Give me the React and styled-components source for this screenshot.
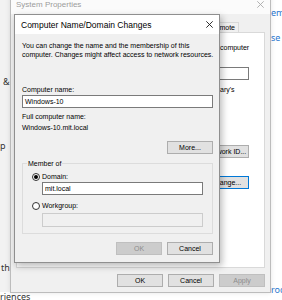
import React from "react";
import styled, { createGlobalStyle } from "styled-components";

const GlobalStyle = createGlobalStyle`
  html, body {
    margin: 0;
    padding: 0;
    background: #ffffff;
  }
  body {
    font-family: "Liberation Sans", Arial, sans-serif;
    color: #000000;
  }
`;

const CloseIcon = ({ color }) => (
  <svg width="7" height="7" viewBox="0 0 7 7">
    <path d="M0.3 0.3 L6.7 6.7 M6.7 0.3 L0.3 6.7" stroke={color} strokeWidth="0.9" fill="none" />
  </svg>
);

const App = () => (
  <>
    <GlobalStyle />
    <Page>
      <LeftStrip>
        <Sidebar>
          <PageText $top={76} $left={3}>&amp;</PageText>
          <PageText $top={52}>p</PageText>
          <PageText $top={110} $left={1}>th</PageText>
        </Sidebar>
        <PageText $top={-1}>riences</PageText>
      </LeftStrip>
      <RightStrip>
        <PageText $top={7} $link>eme</PageText>
        <PageText $top={13} $link>se</PageText>
        <PageText $top={240} $link>roc</PageText>
      </RightStrip>

      <SysWindow>
        <SysTitleBar>
          <SysTitle>System Properties</SysTitle>
          <CloseIcon color="#a9a9a9" />
        </SysTitleBar>
        <SysBody>
          <Tabs>
            <Tab>Remote</Tab>
          </Tabs>
          <TabPanel>
            <PanelRow $gap={0}>
              <span />
              <PanelText>computer</PanelText>
            </PanelRow>
            <PanelRow $gap={15}>
              <span />
              <PanelField />
            </PanelRow>
            <PanelRow $gap={5}>
              <span />
              <PanelText>ary's</PanelText>
            </PanelRow>
            <PanelRow $gap={51}>
              <span />
              <PanelButton>Network ID...</PanelButton>
            </PanelRow>
            <PanelRow $gap={18}>
              <span />
              <PanelButton $focused>Change...</PanelButton>
            </PanelRow>
          </TabPanel>
          <ButtonRow $gap={6}>
            <Button>OK</Button>
            <Button>Cancel</Button>
            <Button disabled>Apply</Button>
          </ButtonRow>
        </SysBody>
      </SysWindow>

      <Dialog>
        <DialogTitleBar>
          <DialogTitle>Computer Name/Domain Changes</DialogTitle>
          <CloseIcon color="#1a1a1a" />
        </DialogTitleBar>
        <DialogBody>
          <Text>
            You can change the name and the membership of this
            <br />
            computer. Changes might affect access to network resources.
          </Text>
          <Text $gap={26}>Computer name:</Text>
          <Field $gap={1}>Windows-10</Field>
          <Text $gap={4}>Full computer name:</Text>
          <Text $gap={2}>Windows-10.mit.local</Text>
          <ButtonRow $gap={9}>
            <Button>More...</Button>
          </ButtonRow>
          <Group>
            <Legend>Member of</Legend>
            <RadioRow>
              <Radio $checked />
              <span>Domain:</span>
            </RadioRow>
            <Field $gap={1} $indent>mit.local</Field>
            <RadioRow $gap={6}>
              <Radio />
              <span>Workgroup:</span>
            </RadioRow>
            <Field $gap={3} $indent $disabled />
          </Group>
          <ButtonRow $gap={8}>
            <Button disabled>OK</Button>
            <Button>Cancel</Button>
          </ButtonRow>
        </DialogBody>
      </Dialog>
    </Page>
  </>
);

export default App;

const Page = styled.div`
  position: relative;
  width: 282px;
  height: 300px;
  overflow: hidden;
  display: flex;
  justify-content: space-between;
  background: #ffffff;
`;

const LeftStrip = styled.div`
  width: 10px;
  display: flex;
  flex-direction: column;
`;

const Sidebar = styled.div`
  height: 292px;
  flex-shrink: 0;
  background: #f2f2f2;
  display: flex;
  flex-direction: column;
`;

const RightStrip = styled.div`
  width: 11px;
  display: flex;
  flex-direction: column;
`;

const PageText = styled.span`
  display: block;
  margin-top: ${p => p.$top}px;
  padding-left: ${p => p.$left || 0}px;
  font-family: "Noto Sans", sans-serif;
  font-size: 9px;
  line-height: 12px;
  color: ${p => (p.$link ? "#2a78cf" : "#333333")};
  white-space: nowrap;
`;

const SysWindow = styled.div`
  position: absolute;
  left: 10px;
  top: -6px;
  width: 261px;
  height: 299px;
  box-sizing: border-box;
  border: 1px solid #bcbcbc;
  background: #f0f0f0;
  display: flex;
  flex-direction: column;
  box-shadow: 0 0 5px rgba(0, 0, 0, 0.1);
`;

const SysTitleBar = styled.div`
  height: 19px;
  flex-shrink: 0;
  background: #fbfbfb;
  display: flex;
  align-items: center;
  justify-content: space-between;
  padding: 0 6px 0 5px;
`;

const SysTitle = styled.span`
  font-size: 8px;
  color: #9c9c9c;
`;

const SysBody = styled.div`
  flex: 1;
  display: flex;
  flex-direction: column;
  padding: 8px 5px 5px 5px;
  min-height: 0;
`;

const Tabs = styled.div`
  height: 10px;
  display: flex;
  justify-content: flex-end;
  align-items: flex-end;
  padding-right: 26px;
`;

const Tab = styled.div`
  width: 34px;
  height: 10px;
  box-sizing: border-box;
  border: 1px solid #d9d9d9;
  border-bottom: none;
  background: #f0f0f0;
  font-size: 7px;
  line-height: 9px;
  text-align: right;
  padding-right: 3px;
  white-space: nowrap;
`;

const TabPanel = styled.div`
  flex: 1;
  background: #ffffff;
  border: 1px solid #d9d9d9;
  padding: 10px 15px 0 8px;
  display: flex;
  flex-direction: column;
`;

const PanelRow = styled.div`
  display: grid;
  grid-template-columns: 1fr 31px;
  align-items: center;
  margin-top: ${p => p.$gap}px;
`;

const PanelText = styled.span`
  font-size: 7px;
  line-height: 9px;
  white-space: nowrap;
  padding-left: 2px;
`;

const PanelField = styled.div`
  height: 13px;
  box-sizing: border-box;
  margin-left: -120px;
  background: #ffffff;
  border: 1px solid #7a7a7a;
`;

const PanelButton = styled.div`
  height: 13px;
  box-sizing: border-box;
  margin-left: -15px;
  background: #e1e1e1;
  border: 1px solid ${p => (p.$focused ? "#0078d7" : "#adadad")};
  font-size: 7px;
  display: flex;
  align-items: center;
  justify-content: center;
  white-space: nowrap;
`;

const ButtonRow = styled.div`
  display: flex;
  justify-content: flex-end;
  gap: 5px;
  margin-top: ${p => p.$gap}px;
`;

const Button = styled.button`
  width: 46px;
  height: 13px;
  box-sizing: border-box;
  padding: 0;
  font-family: inherit;
  font-size: 7px;
  color: #000000;
  background: #e1e1e1;
  border: 1px solid #adadad;
  border-radius: 0;
  &:disabled {
    background: #cccccc;
    border-color: #bfbfbf;
    color: #8c8c8c;
  }
`;

const Dialog = styled.div`
  position: absolute;
  left: 14px;
  top: 14px;
  width: 206px;
  box-sizing: border-box;
  border: 1px solid #8f8f8f;
  background: #f0f0f0;
  display: flex;
  flex-direction: column;
  box-shadow: 2px 3px 7px rgba(0, 0, 0, 0.28);
`;

const DialogTitleBar = styled.div`
  height: 19px;
  background: #ffffff;
  display: flex;
  align-items: center;
  justify-content: space-between;
  padding: 0 6px 0 6px;
`;

const DialogTitle = styled.span`
  font-size: 8.5px;
  color: #000000;
`;

const DialogBody = styled.div`
  display: flex;
  flex-direction: column;
  padding: 7px 6px 7px 7px;
`;

const Text = styled.div`
  font-size: 7px;
  line-height: 9px;
  margin-top: ${p => p.$gap || 0}px;
  white-space: nowrap;
`;

const Field = styled.div`
  height: ${p => (p.$disabled ? 14 : 13)}px;
  box-sizing: border-box;
  margin-top: ${p => p.$gap}px;
  margin-left: ${p => (p.$indent ? 10 : 0)}px;
  padding: 0 2px;
  display: flex;
  align-items: center;
  font-size: 7px;
  background: ${p => (p.$disabled ? "#f0f0f0" : "#ffffff")};
  border: 1px solid ${p => (p.$disabled ? "#cccccc" : "#7a7a7a")};
`;

const Group = styled.fieldset`
  margin: 5px 0 0 0;
  padding: 4px 9px 6px 9px;
  min-width: 0;
  border: 1px solid #dcdcdc;
  display: flex;
  flex-direction: column;
`;

const Legend = styled.legend`
  padding: 0 1px;
  margin-left: -5px;
  font-size: 7px;
  line-height: 9px;
`;

const RadioRow = styled.div`
  display: flex;
  align-items: center;
  gap: 2px;
  font-size: 7px;
  line-height: 9px;
  margin-top: ${p => p.$gap || 0}px;
`;

const Radio = styled.span`
  width: 8px;
  height: 8px;
  box-sizing: border-box;
  border-radius: 50%;
  border: 1px solid #333333;
  background: #ffffff;
  display: flex;
  align-items: center;
  justify-content: center;
  &::after {
    content: "";
    width: 4px;
    height: 4px;
    border-radius: 50%;
    background: ${p => (p.$checked ? "#000000" : "transparent")};
  }
`;
